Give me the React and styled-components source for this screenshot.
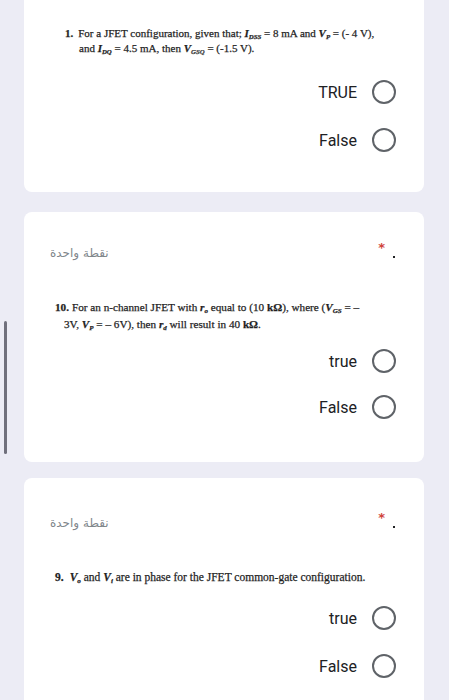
import styled, { createGlobalStyle } from 'styled-components';

const GlobalStyle = createGlobalStyle`
  html, body {
    margin: 0;
    padding: 0;
    background: #ececf5;
    overflow: hidden;
  }
`;

const Page = styled.div`
  position: relative;
  width: 449px;
  height: 700px;
  overflow: hidden;
  background: #ececf5;
  padding: 0 25px 0 24px;
  box-sizing: border-box;
`;

const Card = styled.div`
  background: #ffffff;
  border-radius: 8px;
  width: 400px;
  box-sizing: border-box;
  margin-top: ${(p) => p.$top || 0}px;
  margin-bottom: ${(p) => p.$gap || 0}px;
  padding: ${(p) => p.$pad};
`;

const Header = styled.div`
  display: flex;
  justify-content: space-between;
  align-items: center;
  height: 20px;
  padding: 0 29px 0 26px;
`;

const Points = styled.span`
  font-family: 'DejaVu Sans', sans-serif;
  font-size: 12px;
  color: #80868b;
  direction: rtl;
`;

const Required = styled.span`
  display: flex;
  align-items: flex-start;
  gap: 8px;
  height: 20px;
`;

const Star = styled.span`
  color: #d0443a;
  font-family: 'DejaVu Sans', sans-serif;
  font-size: 13px;
  font-weight: bold;
  line-height: 13px;
  margin-top: -2px;
`;

const Dot = styled.span`
  width: 2px;
  height: 2px;
  background: #202124;
  margin-top: 13px;
`;

const Question = styled.div`
  font-family: 'Liberation Serif', 'Times New Roman', serif;
  font-size: ${(p) => p.$size}px;
  line-height: ${(p) => p.$line}px;
  color: #1f1f1f;
  -webkit-text-stroke: 0.25px #1f1f1f;
  white-space: nowrap;
  margin-top: ${(p) => p.$mt || 0}px;
  padding-left: ${(p) => p.$left}px;
  text-indent: -${(p) => p.$hang}px;
`;

const Num = styled.b`
  font-weight: bold;
  margin-right: ${(p) => p.$space || 4}px;
`;

const Sym = styled.i`
  font-weight: bold;
  font-style: italic;
`;

const Sub = styled.sub`
  font-size: 0.62em;
  font-weight: bold;
  font-style: italic;
  vertical-align: -0.25em;
  line-height: 0;
  color: ${(p) => (p.$faint ? '#555' : 'inherit')};
`;

const Options = styled.div`
  margin-top: ${(p) => p.$mt}px;
  padding-right: 28px;
`;

const Option = styled.label`
  display: flex;
  justify-content: flex-end;
  align-items: center;
  gap: 15px;
  height: ${(p) => p.$h || 48}px;
  font-family: Roboto, 'Noto Sans', sans-serif;
  font-size: 16px;
  color: #202124;
`;

const Radio = styled.span`
  width: 24px;
  height: 24px;
  box-sizing: border-box;
  border: 2px solid #5f6368;
  border-radius: 50%;
`;

const Scrollbar = styled.div`
  position: absolute;
  left: 4px;
  top: 321px;
  width: 3px;
  height: 133px;
  border-radius: 2px;
  background: #70707c;
`;

function Choice({ label, h }) {
  return (
    <Option $h={h}>
      {label}
      <Radio />
    </Option>
  );
}

function CardHeader() {
  return (
    <Header>
      <Points>نقطة واحدة</Points>
      <Required>
        <Star>*</Star>
        <Dot />
      </Required>
    </Header>
  );
}

export default function App() {
  return (
    <>
      <GlobalStyle />
      <Page>
        <Card $top={-8} $gap={20} $pad="34px 0 28px 0">
          <Question $size={11} $line={15} $left={55} $hang={14}>
            <Num $space={5}>1.</Num>For a JFET configuration, given that; <Sym>I</Sym>
            <Sub>DSS</Sub> = 8 mA and <Sym>V</Sym>
            <Sub>P</Sub> = (- 4 V),
            <br />
            and <Sym>I</Sym>
            <Sub>DQ</Sub> = 4.5 mA, then <Sym>V</Sym>
            <Sub $faint>GSQ</Sub> = (-1.5 V).
          </Question>
          <Options $mt={12}>
            <Choice label="TRUE" />
            <Choice label="False" />
          </Options>
        </Card>

        <Card $gap={16} $pad="31px 0 32px 0">
          <CardHeader />
          <Question $size={11.2} $line={17} $mt={36} $left={40} $hang={9}>
            <Num $space={3}>10.</Num>For an n-channel JFET with <Sym>r</Sym>
            <Sub>o</Sub> equal to (10 <b>kΩ</b>), where (<Sym>V</Sym>
            <Sub>GS</Sub> = –
            <br />
            3V, <Sym>V</Sym>
            <Sub>P</Sub> = – 6V), then <Sym>r</Sym>
            <Sub>d</Sub> will result in 40 <b>kΩ</b>.
          </Question>
          <Options $mt={5}>
            <Choice label="true" h={46} />
            <Choice label="False" h={46} />
          </Options>
        </Card>

        <Card $pad="35px 0 30px 0">
          <CardHeader />
          <Question $size={11.5} $line={17} $mt={36} $left={31} $hang={0}>
            <Num $space={6}>9.</Num>
            <Sym>V</Sym>
            <Sub>o</Sub> and <Sym>V</Sym>
            <Sub>i</Sub> are in phase for the JFET common-gate configuration.
          </Question>
          <Options $mt={8}>
            <Choice label="true" />
            <Choice label="False" />
          </Options>
        </Card>
        <Scrollbar />
      </Page>
    </>
  );
}
